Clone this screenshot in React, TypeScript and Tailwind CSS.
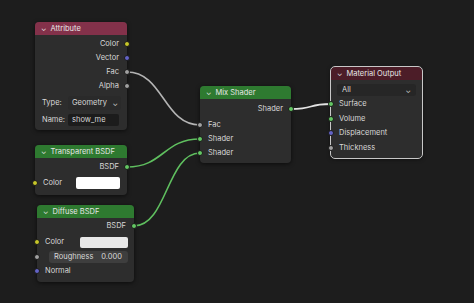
import type { ReactNode } from 'react';

type Side = 'in' | 'out';

const font = { fontFamily: 'Inter, "DejaVu Sans", sans-serif' };

function Socket({ side, color }: { side: Side; color: string }) {
  return (
    <span
      className={`absolute top-1/2 -translate-y-1/2 w-[6px] h-[6px] rounded-full border border-[#1a1a1a] ${
        side === 'in' ? 'left-[-3px]' : 'right-[-3px]'
      } ${color}`}
    />
  );
}

function Row({
  label,
  side,
  color,
  className = '',
}: {
  label: string;
  side: Side;
  color: string;
  className?: string;
}) {
  return (
    <div
      className={`relative h-[14px] flex items-center ${
        side === 'out' ? 'justify-end pr-[8px]' : 'justify-start pl-[8px]'
      } ${className}`}
    >
      {label}
      <Socket side={side} color={color} />
    </div>
  );
}

function Node({
  title,
  header,
  className,
  selected,
  children,
}: {
  title: string;
  header: string;
  className: string;
  selected?: boolean;
  children: ReactNode;
}) {
  return (
    <div
      className={`absolute rounded-[4px] bg-[#2d2d2d] shadow-[0_1px_4px_rgba(0,0,0,0.6)] ${
        selected ? 'outline outline-1 outline-[#c8c8c8]' : ''
      } ${className}`}
    >
      <div className={`h-[13px] rounded-t-[4px] flex items-center pl-[6px] gap-[4px] text-[#e6e6e6] ${header}`}>
        <span className="text-[7px] leading-none mt-[-1px]">⌄</span>
        <span>{title}</span>
      </div>
      {children}
    </div>
  );
}

const yellow = 'bg-[#c7c729]';
const purple = 'bg-[#6363c7]';
const gray = 'bg-[#a1a1a1]';
const green = 'bg-[#63c763]';

function link(x1: number, y1: number, x2: number, y2: number) {
  const d = Math.max(25, (x2 - x1) * 0.5);
  return `M${x1},${y1} C${x1 + d},${y1} ${x2 - d},${y2} ${x2},${y2}`;
}

export default function App() {
  return (
    <div
      className="relative w-[474px] h-[303px] overflow-hidden bg-[#1d1d1d] text-[7.5px] leading-none text-[#d8d8d8]"
      style={font}
    >
      <svg className="absolute inset-0" width={474} height={303}>
        <path d={link(127, 72, 200, 125)} stroke="#b4b4b4" strokeWidth={1.6} fill="none" />
        <path d={link(127, 167, 200, 139)} stroke="#5fbf5f" strokeWidth={1.6} fill="none" />
        <path d={link(134, 226, 200, 153)} stroke="#5fbf5f" strokeWidth={1.6} fill="none" />
        <path d={link(291, 109, 331, 104)} stroke="#e2e2e2" strokeWidth={1.8} fill="none" />
      </svg>

      {/* Attribute */}
      <Node title="Attribute" header="bg-[#83314a]" className="left-[35px] top-[22px] w-[92px] pb-[3px]">
        <div className="pt-[2px]">
          <Row label="Color" side="out" color={yellow} />
          <Row label="Vector" side="out" color={purple} />
          <Row label="Fac" side="out" color={gray} />
          <Row label="Alpha" side="out" color={gray} />
        </div>
        <div className="mt-[3px] h-[14px] flex items-center pl-[7px] pr-[6px]">
          <span className="w-[26px]">Type:</span>
          <div className="flex-1 h-[14px] rounded-[3px] bg-[#2a2a2a] flex items-center justify-between pl-[4px] pr-[3px]">
            <span>Geometry</span>
            <span className="text-[7px]">⌄</span>
          </div>
        </div>
        <div className="mt-[3px] h-[14px] flex items-center pl-[7px] pr-[8px]">
          <span className="w-[26px]">Name:</span>
          <div className="flex-1 h-[12px] rounded-[2px] bg-[#1c1c1c] flex items-center px-[4px]">show_me</div>
        </div>
      </Node>

      {/* Transparent BSDF */}
      <Node title="Transparent BSDF" header="bg-[#2e7a30]" className="left-[35px] top-[145px] w-[92px] pb-[5px]">
        <div className="pt-[2px]">
          <Row label="BSDF" side="out" color={green} />
          <div className="relative mt-[2px] h-[14px] flex items-center pl-[8px] pr-[7px]">
            <span className="flex-1">Color</span>
            <span className="w-[44px] h-[12px] rounded-[2px] bg-white" />
            <Socket side="in" color={yellow} />
          </div>
        </div>
      </Node>

      {/* Diffuse BSDF */}
      <Node title="Diffuse BSDF" header="bg-[#2e7a30]" className="left-[37px] top-[205px] w-[97px] pb-[4px]">
        <div className="pt-[1px]">
          <Row label="BSDF" side="out" color={green} />
          <div className="relative mt-[2px] h-[14px] flex items-center pl-[8px] pr-[6px]">
            <span className="flex-1">Color</span>
            <span className="w-[48px] h-[11px] rounded-[2px] bg-[#e8e8e8]" />
            <Socket side="in" color={yellow} />
          </div>
          <div className="relative mt-[1px] h-[14px] flex items-center pl-[12px] pr-[6px]">
            <div className="flex-1 h-[12px] rounded-[3px] bg-[#3e3e3e] flex items-center justify-between pl-[5px] pr-[6px]">
              <span>Roughness</span>
              <span>0.000</span>
            </div>
            <Socket side="in" color={gray} />
          </div>
          <Row label="Normal" side="in" color={purple} />
        </div>
      </Node>

      {/* Mix Shader */}
      <Node title="Mix Shader" header="bg-[#2e7a30]" className="left-[200px] top-[86px] w-[91px] pb-[3px]">
        <div className="pt-[3px]">
          <Row label="Shader" side="out" color={green} />
          <Row label="Fac" side="in" color={gray} className="mt-[2px]" />
          <Row label="Shader" side="in" color={green} />
          <Row label="Shader" side="in" color={green} />
        </div>
      </Node>

      {/* Material Output */}
      <Node
        title="Material Output"
        header="bg-[#4c1d28]"
        selected
        className="left-[331px] top-[67px] w-[91px] pb-[3px]"
      >
        <div className="mt-[4px] mx-[6px] h-[12px] rounded-[3px] bg-[#262626] flex items-center justify-between px-[5px]">
          <span>All</span>
          <span className="text-[7px]">⌄</span>
        </div>
        <Row label="Surface" side="in" color={green} className="mt-[1px]" />
        <Row label="Volume" side="in" color={green} className="mt-[1px]" />
        <Row label="Displacement" side="in" color={purple} />
        <Row label="Thickness" side="in" color={gray} className="mt-[1px]" />
      </Node>
    </div>
  );
}
